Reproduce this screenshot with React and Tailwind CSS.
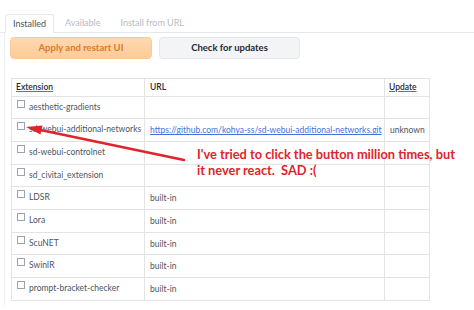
import React from 'react';

const rows = [
  { name: 'aesthetic-gradients', url: '', update: '' },
  { name: 'sd-webui-additional-networks', url: 'https://github.com/kohya-ss/sd-webui-additional-networks.git', link: true, update: 'unknown' },
  { name: 'sd-webui-controlnet', url: '', update: '' },
  { name: 'sd_civitai_extension', url: '', update: '' },
  { name: 'LDSR', url: 'built-in', update: '' },
  { name: 'Lora', url: 'built-in', update: '' },
  { name: 'ScuNET', url: 'built-in', update: '' },
  { name: 'SwinIR', url: 'built-in', update: '' },
  { name: 'prompt-bracket-checker', url: 'built-in', update: '' },
];

const App = () => {
  return (
    <div className="relative w-[474px] h-[310px] overflow-hidden bg-white font-['Lato',sans-serif] text-[#374151]">
      {/* Tabs */}
      <div className="flex items-end pt-[14px] pl-[5px] border-b border-[#e5e7eb] h-[33px]">
        <div className="w-[49px] h-[19px] border border-b-0 border-[#e5e7eb] rounded-t-[3px] bg-white flex items-center justify-center text-[9px] text-[#4b5563] -mb-px">
          Installed
        </div>
        <div className="ml-[11px] h-[19px] flex items-center text-[9px] text-[#b6bbc3]">Available</div>
        <div className="ml-[20px] h-[19px] flex items-center text-[9px] text-[#b6bbc3]">Install from URL</div>
      </div>

      {/* Panel */}
      <div className="ml-[4px] border-l border-[#eceef1] h-[272px] pl-[5px] pt-[4px]">
        <div className="flex gap-[7px]">
          <button className="w-[142px] h-[22px] rounded-[4px] border border-[#fdc896] bg-gradient-to-b from-[#ffd9b0] to-[#fecb97] text-[9.5px] font-bold text-[#d97a2b]">
            Apply and restart UI
          </button>
          <button className="w-[141px] h-[22px] rounded-[4px] border border-[#e5e7eb] bg-[#f3f4f6] text-[9.5px] font-bold text-[#1f2937]">
            Check for updates
          </button>
        </div>

        <table className="mt-[19px] ml-[1px] border-collapse text-[8.5px] text-[#4b5563] table-fixed w-[418px]">
          <colgroup>
            <col className="w-[133px]" />
            <col className="w-[240px]" />
            <col className="w-[45px]" />
          </colgroup>
          <thead>
            <tr className="h-[17.5px]">
              <th className="border border-[#e3e3e3] text-left font-semibold text-[#1f2937] pl-[4px] align-middle">
                <span className="underline decoration-[#6b7280]">Extension</span>
              </th>
              <th className="border border-[#e3e3e3] text-left font-semibold text-[#1f2937] pl-[5px] align-middle">URL</th>
              <th className="border border-[#e3e3e3] text-left font-semibold text-[#1f2937] pl-[4px] align-middle">
                <span className="underline decoration-[#6b7280]">Update</span>
              </th>
            </tr>
          </thead>
          <tbody>
            {rows.map((r) => (
              <tr key={r.name} className="h-[22.7px]">
                <td className="border border-[#e3e3e3] align-top pl-[5px] pt-[3px]">
                  <div className="flex items-start gap-[4px] whitespace-nowrap">
                    <span className="w-[8px] h-[8px] border border-[#9ca3af] bg-white shrink-0" />
                    <span className="leading-[14px]">{r.name}</span>
                  </div>
                </td>
                <td className="border border-[#e3e3e3] align-top pl-[5px] pt-[4px] leading-[14px] whitespace-nowrap">
                  {r.link ? (
                    <span className="text-[#4b6fd6] underline">{r.url}</span>
                  ) : (
                    r.url
                  )}
                </td>
                <td className="border border-[#e3e3e3] align-top pl-[5px] pt-[4px] leading-[14px] whitespace-nowrap">{r.update}</td>
              </tr>
            ))}
          </tbody>
        </table>
      </div>

      {/* Annotation */}
      <svg className="absolute left-0 top-0 pointer-events-none" width="474" height="310" viewBox="0 0 474 310">
        <line x1="184" y1="160" x2="38" y2="129.5" stroke="#e0242c" strokeWidth="2.6" strokeLinecap="round" />
        <polygon points="26,127 42.5,125.5 40.5,134.5" fill="#e0242c" />
      </svg>
      <div className="absolute left-[197px] top-[146px] text-[12.8px] leading-[16px] font-bold text-[#e0242c] whitespace-pre">
        {"I've tried to click the button million times, but\nit never react.  SAD :("}
      </div>
    </div>
  );
};

export default App;
